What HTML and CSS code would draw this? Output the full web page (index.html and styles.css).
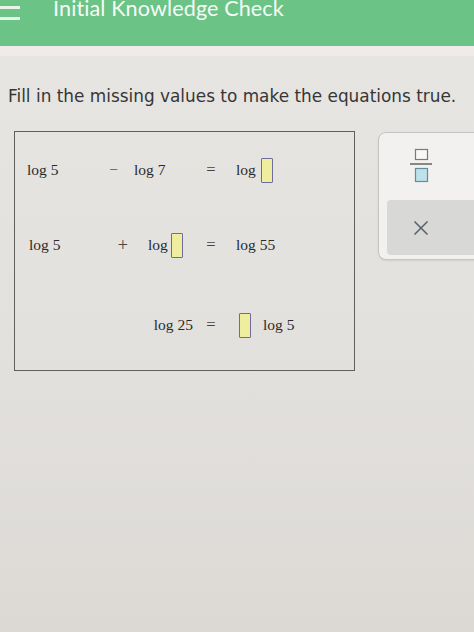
FILE: index.html
```html
<!DOCTYPE html>
<html>
<head>
<meta charset="utf-8">
<link rel="stylesheet" href="styles.css">
</head>
<body>
<header class="topbar">
  <div class="burger"><span></span><span></span></div>
  <div class="title">Initial Knowledge Check</div>
</header>
<div class="strip"></div>
<main class="content">
  <p class="prompt">Fill in the missing values to make the equations true.</p>
  <div class="work">
    <div class="eqbox">
      <div class="eq r1">
        <span class="t a">log 5</span>
        <span class="op minus">−</span>
        <span class="t b">log 7</span>
        <span class="op eqs">=</span>
        <span class="t c">log<span class="slot s1"></span></span>
      </div>
      <div class="eq r2">
        <span class="t a2">log 5</span>
        <span class="op plus">+</span>
        <span class="t b2">log<span class="slot s2"></span></span>
        <span class="op eqs">=</span>
        <span class="t c">log 55</span>
      </div>
      <div class="eq r3">
        <span class="t b3">log 25</span>
        <span class="op eqs">=</span>
        <span class="t c"><span class="slot s3"></span>log 5</span>
      </div>
    </div>
    <div class="panel">
      <div class="frac">
        <svg width="22" height="36" viewBox="0 0 22 36">
          <rect x="5.5" y="1.5" width="12" height="10" fill="#f7f7f5" stroke="#7a7a7a" stroke-width="1.2"/>
          <line x1="0" y1="16" x2="22" y2="16" stroke="#5a5a5a" stroke-width="1.4"/>
          <rect x="5.5" y="20.5" width="12" height="13" fill="#bfe2ea" stroke="#5d8f9e" stroke-width="1.2"/>
        </svg>
      </div>
      <div class="clear">
        <svg width="16" height="16" viewBox="0 0 16 16">
          <path d="M1.5 1.5 L14.5 14.5 M14.5 1.5 L1.5 14.5" stroke="#55606a" stroke-width="1.5" fill="none"/>
        </svg>
      </div>
    </div>
  </div>
</main>
</body>
</html>
```
FILE: styles.css
```css
* { box-sizing: border-box; }
html, body { margin: 0; padding: 0; }
body {
  width: 474px;
  height: 632px;
  overflow: hidden;
  background: linear-gradient(180deg, #e8e6e3 0%, #e2e0dd 60%, #dcd9d5 100%);
  font-family: "DejaVu Sans", Verdana, sans-serif;
}
.topbar {
  height: 46px;
  background: #6bc386;
  display: flex;
  align-items: flex-start;
  overflow: hidden;
}
.burger {
  width: 20px;
  flex-shrink: 0;
  padding-top: 6px;
  display: flex;
  flex-direction: column;
  gap: 8px;
}
.burger span {
  display: block;
  height: 3px;
  background: #e6f4ea;
}
.title {
  margin-left: 33px;
  margin-top: -3px;
  font-family: Lato, "Open Sans", sans-serif;
  font-size: 21.6px;
  line-height: 22px;
  color: #f4fbf6;
  letter-spacing: 0.1px;
}
.strip {
  height: 10px;
  background: #efebe8;
}
.content { padding: 0; }
.prompt {
  margin: 29px 0 0 8px;
  font-size: 16.9px;
  line-height: 22px;
  color: #363636;
  white-space: nowrap;
}
.work {
  display: flex;
  align-items: flex-start;
  margin-top: 24px;
}
.eqbox {
  flex-shrink: 0;
  margin-left: 14px;
  width: 341px;
  height: 240px;
  border: 1.5px solid #5f5f5f;
  padding: 25px 0 0 0;
  display: flex;
  flex-direction: column;
  font-family: "Liberation Serif", "Times New Roman", serif;
  font-size: 15.5px;
  color: #2a2a2a;
}
.eq {
  display: grid;
  grid-template-columns: 88px 28px 64px 32px auto;
  height: 26px;
  align-items: center;
}
.r2 { margin-top: 49px; }
.r3 { margin-top: 54px; }
.t { white-space: nowrap; display: flex; align-items: center; }
.a { grid-column: 1; padding-left: 12px; }
.a2 { grid-column: 1; padding-left: 14px; }
.minus { grid-column: 2; justify-self: end; margin-right: 13px; color: #555; }
.plus { grid-column: 2; justify-self: end; margin-right: 3px; font-size: 18px; color: #444; }
.b { grid-column: 3; padding-left: 3px; }
.b2 { grid-column: 3; padding-left: 17px; }
.b3 { grid-column: 3; justify-self: end; margin-right: 2px; }
.eqs { grid-column: 4; justify-self: center; color: #444; font-size: 16.5px; }
.c { grid-column: 5; padding-left: 9px; }
.slot {
  display: inline-block;
  width: 12px;
  height: 25px;
  background: #efee9f;
  border: 1.5px solid #6d6c9c;
  border-radius: 1px;
}
.s1 { margin-left: 5px; }
.s2 { margin-left: 3px; }
.s3 { margin-left: 3px; margin-right: 12px; }
.panel {
  flex-shrink: 0;
  margin-left: 23px;
  margin-top: 1px;
  width: 110px;
  height: 128px;
  border: 1px solid #c4c4c2;
  border-radius: 8px;
  background: #f2f1ef;
  box-shadow: 0 1px 2px rgba(0,0,0,0.08);
  display: flex;
  flex-direction: column;
  padding: 15px 0 0 8px;
}
.frac {
  display: flex;
  padding-left: 23px;
}
.frac svg { display: block; }
.clear {
  margin-top: 16px;
  height: 55px;
  background: #d8d8d6;
  border-radius: 4px 0 0 4px;
  display: flex;
  align-items: center;
  padding-left: 26px;
}
.clear svg { display: block; }
```
